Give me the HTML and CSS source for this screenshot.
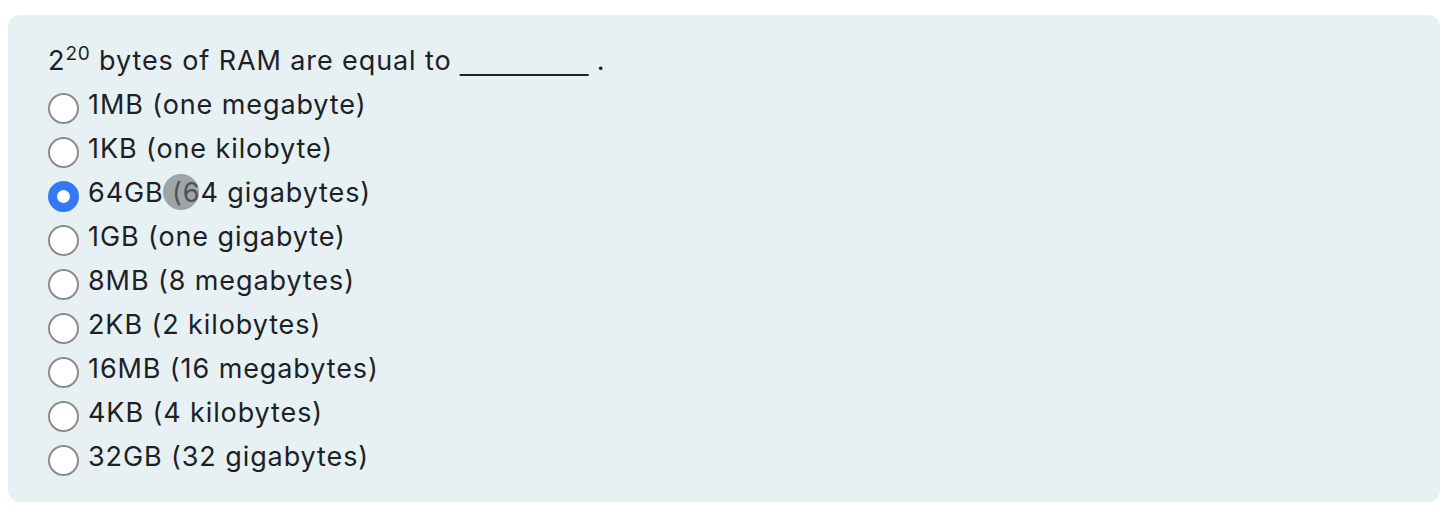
FILE: index.html
```html
<!DOCTYPE html>
<html lang="en">
<head>
<meta charset="utf-8">
<title>Quiz question</title>
<link rel="stylesheet" href="styles.css">
</head>
<body>
<div class="card">
  <div class="question">2<sup>20</sup> bytes of RAM are equal to <span class="blank">________</span> .</div>
  <div class="answers">
    <label class="option"><input type="radio" name="q1"><span>1MB (one megabyte)</span></label>
    <label class="option"><input type="radio" name="q1"><span>1KB (one kilobyte)</span></label>
    <label class="option"><input type="radio" name="q1" checked><span class="txt">64GB (64 gigabytes)<span class="ripple"></span></span></label>
    <label class="option"><input type="radio" name="q1"><span>1GB (one gigabyte)</span></label>
    <label class="option"><input type="radio" name="q1"><span>8MB (8 megabytes)</span></label>
    <label class="option"><input type="radio" name="q1"><span>2KB (2 kilobytes)</span></label>
    <label class="option"><input type="radio" name="q1"><span>16MB (16 megabytes)</span></label>
    <label class="option"><input type="radio" name="q1"><span>4KB (4 kilobytes)</span></label>
    <label class="option"><input type="radio" name="q1"><span>32GB (32 gigabytes)</span></label>
  </div>
</div>
</body>
</html>
```
FILE: styles.css
```css
html, body {
  margin: 0;
  padding: 0;
  background: #ffffff;
}
body {
  font-family: Inter, "Open Sans", "Liberation Sans", sans-serif;
  font-size: 27px;
  letter-spacing: 0.9px;
  color: #1d2125;
}
.card {
  margin: 15px 2px 0 8px;
  background: #e7f1f4;
  border-radius: 12px;
  padding: 23px 40px 23px 40px;
}
.question {
  line-height: 44px;
}
.question sup {
  font-size: 19px;
  line-height: 0;
  vertical-align: 10px;
  letter-spacing: 0.8px;
}
.blank {
  font-family: "Liberation Sans", Arial, sans-serif;
  font-size: 28.8px;
  letter-spacing: 0;
}
.answers {
  display: flex;
  flex-direction: column;
}
.option {
  display: flex;
  align-items: center;
  height: 44px;
  line-height: 44px;
}
.option input {
  appearance: none;
  -webkit-appearance: none;
  margin: 7px 9px 0 0;
  width: 31px;
  height: 31px;
  border: 2px solid #8c8c8c;
  border-radius: 50%;
  background: #ffffff;
  box-sizing: border-box;
  flex: none;
}
.option input:checked {
  border: 9px solid #3478f6;
  background: #ffffff;
}
.txt {
  position: relative;
}
.ripple {
  position: absolute;
  left: 75px;
  top: 3px;
  width: 36px;
  height: 36px;
  border-radius: 50%;
  background: rgba(110, 115, 115, 0.6);
  pointer-events: none;
}
```
